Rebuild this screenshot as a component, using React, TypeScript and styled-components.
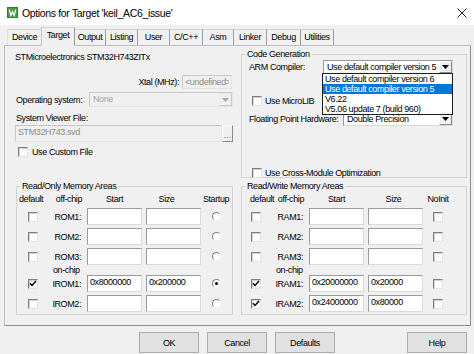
import React from 'react';
import styled, { createGlobalStyle } from 'styled-components';

const FONT = `"Liberation Sans", Arial, sans-serif`;

const GlobalStyle = createGlobalStyle`
  html, body { margin: 0; padding: 0; background: #f0f0f0; }
  body { font-family: ${FONT}; font-size: 9px; letter-spacing: -0.4px; color: #000; }
  #root { width: 474px; height: 354px; overflow: hidden; }
  *, *::before, *::after { box-sizing: border-box; }
`;

const Window = styled.div`
  width: 474px;
  height: 354px;
  background: #f0f0f0;
  display: flex;
  flex-direction: column;
  overflow: hidden;
`;

const TitleBar = styled.div`
  height: 25px;
  background: #ffffff;
  display: flex;
  align-items: center;
  padding: 0 7px;
`;

const TitleText = styled.span`
  margin-left: 4px;
  font-size: 10.5px;
  letter-spacing: -0.35px;
  color: #000;
`;

const CloseIcon = styled.svg`
  margin-left: auto;
`;

const TabStrip = styled.div`
  height: 20px;
  display: flex;
  align-items: flex-end;
  padding-left: 8px;
`;

const Tab = styled.div<{ $w: number; $active?: boolean }>`
  position: relative;
  width: ${p => p.$w}px;
  height: ${p => (p.$active ? 19 : 16)}px;
  margin-left: -1px;
  margin-bottom: ${p => (p.$active ? -1 : 0)}px;
  z-index: ${p => (p.$active ? 2 : 1)};
  border: 1px solid #d4d4d4;
  border-left-color: ${p => (p.$active ? '#c4c4c4' : '#9c9c9c')};
  border-right-color: #9c9c9c;
  border-bottom: ${p => (p.$active ? '1px solid #f0f0f0' : 'none')};
  background: #f0f0f0;
  text-align: center;
  line-height: ${p => (p.$active ? 15 : 14)}px;
  white-space: nowrap;
  &:first-child { border-left-color: #e0e0e0; }
`;

const Page = styled.div`
  margin: 0 3px 0 4px;
  height: 281px;
  border: 1px solid #bdbdbd;
  border-right-color: #8e8e8e;
  border-bottom-color: #8e8e8e;
  padding: 2px 3px 0 10px;
  display: grid;
  grid-template-columns: 218px 226px;
  grid-template-rows: 130px 135px;
  column-gap: 8px;
  row-gap: 2px;
`;

const InfoColumn = styled.div`
  display: flex;
  flex-direction: column;
`;

const DeviceName = styled.div`
  margin-top: 3px;
  line-height: 12px;
  white-space: nowrap;
`;

const XtalRow = styled.div`
  margin-top: 12px;
  display: flex;
  justify-content: flex-end;
  align-items: center;
  gap: 3px;
  padding-right: 1px;
`;

const Label = styled.span<{ $w?: number; $ml?: number }>`
  ${p => (p.$w ? `width: ${p.$w}px; flex: none;` : '')}
  margin-left: ${p => p.$ml ?? 0}px;
  line-height: 12px;
  white-space: nowrap;
`;

const SpreadRow = styled.div<{ $mt: number }>`
  margin-top: ${p => p.$mt}px;
  display: flex;
  align-items: center;
  justify-content: space-between;
`;

const PlainRow = styled.div<{ $mt: number; $ml?: number; $gap?: number }>`
  margin-top: ${p => p.$mt}px;
  margin-left: ${p => p.$ml ?? 0}px;
  display: flex;
  align-items: center;
  gap: ${p => p.$gap ?? 0}px;
`;

const TextField = styled.input<{ $w: number; $h?: number; $disabled?: boolean }>`
  width: ${p => p.$w}px;
  height: ${p => p.$h ?? 17}px;
  flex: none;
  margin: 0;
  padding: 0 2px 3px;
  font: inherit;
  font-size: 9px;
  letter-spacing: -0.4px;
  color: ${p => (p.$disabled ? '#8c8c8c' : '#000')};
  background: ${p => (p.$disabled ? '#f0f0f0' : '#ffffff')};
  border: 1px solid;
  border-color: ${p => (p.$disabled ? '#c8c8c8 #e4e4e4 #e4e4e4 #c8c8c8' : '#9a9a9a #dadada #dadada #9a9a9a')};
  outline: none;
  border-radius: 0;
`;

const EllipsisButton = styled.div`
  width: 11px;
  height: 17px;
  flex: none;
  border: 1px solid;
  border-color: #ffffff #8a8a8a #8a8a8a #ffffff;
  background: #f0f0f0;
  color: #6a6a6a;
  display: flex;
  align-items: flex-end;
  justify-content: center;
  line-height: 11px;
  font-size: 9px;
  letter-spacing: 0;
`;

const SelectBox = styled.div<{ $w: number; $disabled?: boolean }>`
  position: relative;
  width: ${p => p.$w}px;
  height: ${p => (p.$disabled ? 15 : 14)}px;
  flex: none;
  display: flex;
  align-items: stretch;
  background: ${p => (p.$disabled ? '#f0f0f0' : '#ffffff')};
  border: 1px solid;
  border-color: ${p => (p.$disabled ? '#c8c8c8 #e4e4e4 #e4e4e4 #c8c8c8' : '#9a9a9a #dadada #dadada #9a9a9a')};
  color: ${p => (p.$disabled ? '#a3a3a3' : '#000')};
`;

const SelectText = styled.span`
  flex: 1;
  padding-left: 3px;
  line-height: 12px;
  overflow: hidden;
  white-space: nowrap;
`;

const DropButton = styled.span<{ $disabled?: boolean }>`
  width: 13px;
  flex: none;
  display: flex;
  align-items: center;
  justify-content: center;
  border: 1px solid;
  border-color: ${p => (p.$disabled ? '#e8e8e8 #c8c8c8 #c8c8c8 #e8e8e8' : '#ffffff #8a8a8a #8a8a8a #ffffff')};
  background: #f0f0f0;
`;

const DropList = styled.ul`
  position: absolute;
  top: 13px;
  left: -1px;
  width: 131px;
  margin: 0;
  padding: 0;
  list-style: none;
  background: #ffffff;
  border: 1px solid #1e1e1e;
  z-index: 5;
`;

const DropItem = styled.li<{ $selected?: boolean }>`
  height: 10px;
  line-height: 10px;
  padding-left: 2px;
  white-space: nowrap;
  background: ${p => (p.$selected ? '#0078d7' : 'transparent')};
  color: ${p => (p.$selected ? '#ffffff' : '#000')};
`;

const CheckBox = styled.span<{ $align?: string; $ml?: number }>`
  width: 10px;
  height: 10px;
  flex: none;
  display: inline-flex;
  align-items: center;
  justify-content: center;
  justify-self: ${p => p.$align ?? 'center'};
  margin-left: ${p => p.$ml ?? 0}px;
  background: #ffffff;
  border: 1px solid;
  border-color: #7e7e7e #e2e2e2 #e2e2e2 #7e7e7e;
  box-shadow: inset 1px 1px 0 #d2d2d2;
`;

const Radio = styled.span<{ $on?: boolean }>`
  width: 9px;
  height: 9px;
  justify-self: center;
  border-radius: 50%;
  background: #ffffff;
  border: 1px solid;
  border-color: #7e7e7e #f4f4f4 #f4f4f4 #7e7e7e;
  display: flex;
  align-items: center;
  justify-content: center;
  &::after {
    content: '';
    width: 3px;
    height: 3px;
    border-radius: 50%;
    background: ${p => (p.$on ? '#000' : 'transparent')};
  }
`;

const GroupBox = styled.fieldset<{ $ml?: number }>`
  margin: 0 0 0 ${p => p.$ml ?? 0}px;
  padding: 0;
  min-width: 0;
  height: 100%;
  border: 1px solid #d3d3d3;
  border-radius: 0;
`;

const GroupTitle = styled.legend`
  margin-left: 3px;
  padding: 0 2px;
  line-height: 12px;
  font-size: 9px;
`;

const CodeGenBody = styled.div`
  padding-left: 7px;
  display: flex;
  flex-direction: column;
`;

const ComboWrap = styled.div`
  position: relative;
  flex: none;
`;

const MemGrid = styled.div<{ $cols: string; $pl: number }>`
  display: grid;
  grid-template-columns: ${p => p.$cols};
  grid-template-rows: 13px repeat(3, 17px) 4px repeat(2, 17px);
  column-gap: 4px;
  row-gap: 3px;
  padding-left: ${p => p.$pl}px;
  align-items: center;
`;

const HeadCell = styled.span<{ $align?: string; $shift?: number }>`
  justify-self: ${p => p.$align ?? 'center'};
  line-height: 12px;
  white-space: nowrap;
  transform: translateX(${p => p.$shift ?? 0}px);
`;

const RowLabel = styled.span`
  text-align: right;
  padding-right: 2px;
  white-space: nowrap;
  line-height: 12px;
`;

const OnChip = styled.span`
  grid-column: 2 / -1;
  padding-left: 2px;
  line-height: 10px;
  white-space: nowrap;
`;

const ButtonRow = styled.div`
  margin-top: 6px;
  display: flex;
  gap: 8px;
  padding: 0 7px 0 139px;
`;

const DlgButton = styled.button<{ $push?: boolean }>`
  width: 60px;
  height: 21px;
  margin: 0 0 0 ${p => (p.$push ? 'auto' : '0')};
  padding: 0;
  font: inherit;
  font-size: 9px;
  letter-spacing: -0.4px;
  color: #000;
  background: #e1e1e1;
  border: 1px solid #adadad;
  border-radius: 0;
`;

const Arrow = ({ disabled }: { disabled?: boolean }) => (
  <svg width="7" height="4" viewBox="0 0 7 4">
    <polygon points="0,0 7,0 3.5,4" fill={disabled ? '#a8a8a8' : '#000'} />
  </svg>
);

const Tick = () => (
  <svg width="8" height="7" viewBox="0 0 8 7">
    <path d="M1 3.2 L3 5.4 L7 1" stroke="#000" strokeWidth="1.5" fill="none" />
  </svg>
);

const Check = ({ on, align, ml }: { on?: boolean; align?: string; ml?: number }) => (
  <CheckBox $align={align} $ml={ml}>{on ? <Tick /> : null}</CheckBox>
);

const AppIcon = () => (
  <svg width="11" height="11" viewBox="0 0 11 11">
    <rect x="0" y="0" width="11" height="11" fill="#2f7d32" />
    <rect x="1" y="1" width="9" height="9" fill="#4c9f45" />
    <path d="M2.3 2.8 L3.9 8.4 L5.5 4.8 L7.1 8.4 L8.7 2.8" stroke="#ffffff" strokeWidth="1.3" fill="none" />
  </svg>
);

const tabs = [
  { name: 'Device', w: 35 },
  { name: 'Target', w: 34, active: true },
  { name: 'Output', w: 32 },
  { name: 'Listing', w: 33 },
  { name: 'User', w: 33 },
  { name: 'C/C++', w: 34 },
  { name: 'Asm', w: 32 },
  { name: 'Linker', w: 34 },
  { name: 'Debug', w: 35 },
  { name: 'Utilities', w: 34 },
];

type MemRow = { label: string; start: string; size: string; def: boolean; flag: boolean };

const romRows: MemRow[] = [
  { label: 'ROM1:', start: '', size: '', def: false, flag: false },
  { label: 'ROM2:', start: '', size: '', def: false, flag: false },
  { label: 'ROM3:', start: '', size: '', def: false, flag: false },
  { label: 'IROM1:', start: '0x8000000', size: '0x200000', def: true, flag: true },
  { label: 'IROM2:', start: '', size: '', def: false, flag: false },
];

const ramRows: MemRow[] = [
  { label: 'RAM1:', start: '', size: '', def: false, flag: false },
  { label: 'RAM2:', start: '', size: '', def: false, flag: false },
  { label: 'RAM3:', start: '', size: '', def: false, flag: false },
  { label: 'IRAM1:', start: '0x20000000', size: '0x20000', def: true, flag: false },
  { label: 'IRAM2:', start: '0x24000000', size: '0x80000', def: true, flag: false },
];

type MemProps = {
  title: string;
  rows: MemRow[];
  cols: string;
  pl: number;
  lastHead: string;
  sizeShift: number;
  checkAlign: string;
  checkMl: number;
  radio: boolean;
  ml?: number;
};

const MemoryGroup = ({ title, rows, cols, pl, lastHead, sizeShift, checkAlign, checkMl, radio, ml }: MemProps) => {
  const renderRow = (r: MemRow) => (
    <React.Fragment key={r.label}>
      <Check on={r.def} align={checkAlign} ml={checkMl} />
      <RowLabel>{r.label}</RowLabel>
      <TextField $w={55} readOnly value={r.start} />
      <TextField $w={55} readOnly value={r.size} />
      {radio ? <Radio $on={r.flag} /> : <Check on={r.flag} />}
    </React.Fragment>
  );
  return (
    <GroupBox $ml={ml}>
      <GroupTitle>{title}</GroupTitle>
      <MemGrid $cols={cols} $pl={pl}>
        <HeadCell $align="start">default</HeadCell>
        <HeadCell $align="end" $shift={-1}>off-chip</HeadCell>
        <HeadCell>Start</HeadCell>
        <HeadCell $shift={sizeShift}>Size</HeadCell>
        <HeadCell>{lastHead}</HeadCell>
        {rows.slice(0, 3).map(renderRow)}
        <span />
        <OnChip>on-chip</OnChip>
        {rows.slice(3).map(renderRow)}
      </MemGrid>
    </GroupBox>
  );
};

export default function App() {
  return (
    <>
      <GlobalStyle />
      <Window>
        <TitleBar>
          <AppIcon />
          <TitleText>Options for Target 'keil_AC6_issue'</TitleText>
          <CloseIcon width="10" height="10" viewBox="0 0 10 10">
            <path d="M0.5 0.5 L9.5 9.5 M9.5 0.5 L0.5 9.5" stroke="#222" strokeWidth="1" />
          </CloseIcon>
        </TitleBar>
        <TabStrip>
          {tabs.map(t => (
            <Tab key={t.name} $w={t.w} $active={t.active}>{t.name}</Tab>
          ))}
        </TabStrip>
        <Page>
          <InfoColumn>
            <DeviceName>STMicroelectronics STM32H743ZITx</DeviceName>
            <XtalRow>
              <Label>Xtal (MHz):</Label>
              <TextField $w={50} $h={14} $disabled readOnly value="<undefined>" style={{ paddingBottom: 1 }} />
            </XtalRow>
            <SpreadRow $mt={3}>
              <Label $ml={1}>Operating system:</Label>
              <SelectBox $w={144} $disabled>
                <SelectText>None</SelectText>
                <DropButton $disabled><Arrow disabled /></DropButton>
              </SelectBox>
            </SpreadRow>
            <PlainRow $mt={5} $ml={1}>
              <Label>System Viewer File:</Label>
            </PlainRow>
            <PlainRow $mt={1}>
              <TextField $w={207} $disabled readOnly value="STM32H743.svd" />
              <EllipsisButton>...</EllipsisButton>
            </PlainRow>
            <PlainRow $mt={4} $ml={3} $gap={4}>
              <Check />
              <Label>Use Custom File</Label>
            </PlainRow>
          </InfoColumn>

          <GroupBox>
            <GroupTitle>Code Generation</GroupTitle>
            <CodeGenBody>
              <PlainRow $mt={0}>
                <Label $w={74}>ARM Compiler:</Label>
                <ComboWrap>
                  <SelectBox $w={130}>
                    <SelectText>Use default compiler version 5</SelectText>
                    <DropButton><Arrow /></DropButton>
                  </SelectBox>
                  <DropList>
                    <DropItem>Use default compiler version 6</DropItem>
                    <DropItem $selected>Use default compiler version 5</DropItem>
                    <DropItem>V6.22</DropItem>
                    <DropItem>V5.06 update 7 (build 960)</DropItem>
                  </DropList>
                </ComboWrap>
              </PlainRow>
              <PlainRow $mt={21} $ml={3} $gap={3}>
                <Check />
                <Label>Use MicroLIB</Label>
              </PlainRow>
              <PlainRow $mt={5}>
                <Label $w={94}>Floating Point Hardware:</Label>
                <SelectBox $w={110}>
                  <SelectText>Double Precision</SelectText>
                  <DropButton><Arrow /></DropButton>
                </SelectBox>
              </PlainRow>
              <PlainRow $mt={41} $ml={3} $gap={3}>
                <Check />
                <Label>Use Cross-Module Optimization</Label>
              </PlainRow>
            </CodeGenBody>
          </GroupBox>

          <MemoryGroup
            title="Read/Only Memory Areas"
            rows={romRows}
            cols="28px 32px 55px 55px 22px"
            pl={2}
            lastHead="Startup"
            sizeShift={-7}
            checkAlign="center"
            checkMl={0}
            radio
            ml={1}
          />
          <MemoryGroup
            title="Read/Write Memory Areas"
            rows={ramRows}
            cols="20px 31px 55px 55px 22px"
            pl={8}
            lastHead="NoInit"
            sizeShift={-2}
            checkAlign="start"
            checkMl={1}
            radio={false}
          />
        </Page>
        <ButtonRow>
          <DlgButton>OK</DlgButton>
          <DlgButton>Cancel</DlgButton>
          <DlgButton>Defaults</DlgButton>
          <DlgButton $push>Help</DlgButton>
        </ButtonRow>
      </Window>
    </>
  );
}
